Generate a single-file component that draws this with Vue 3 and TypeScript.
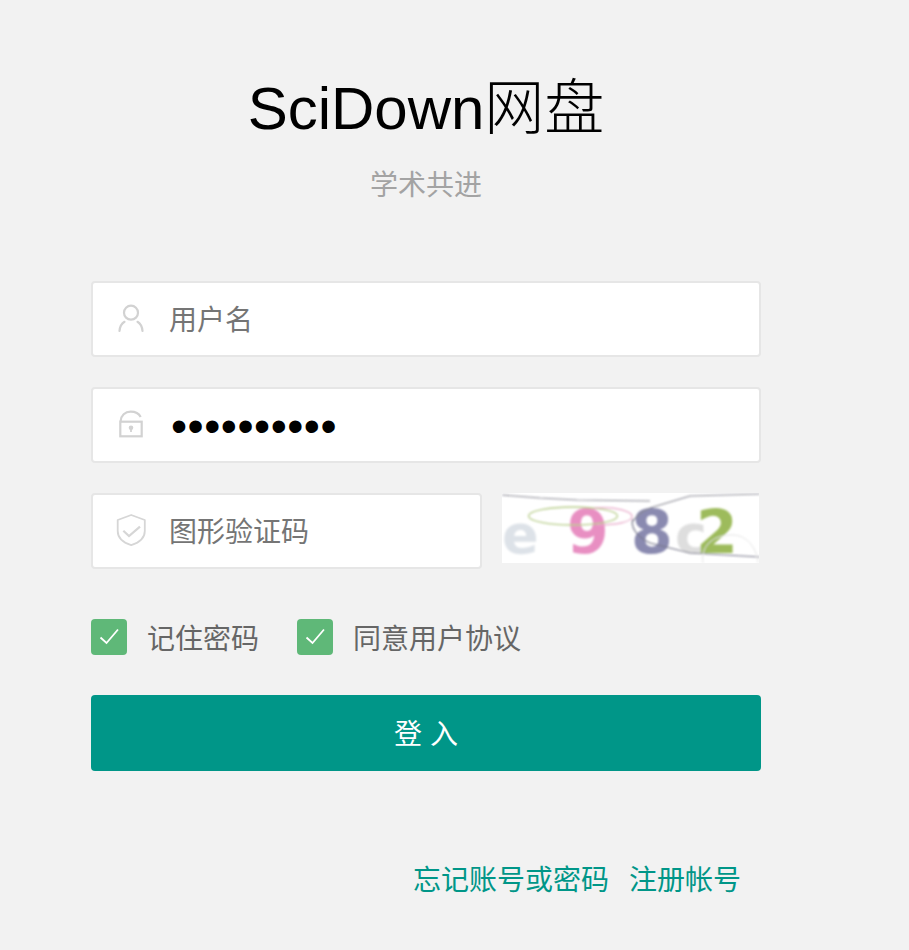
<script setup lang="ts">
const remember = [
  { label: '记住密码' },
  { label: '同意用户协议' },
]
</script>

<template>
  <main class="page">
    <header class="head">
      <h1 class="title">SciDown网盘</h1>
      <p class="sub">学术共进</p>
    </header>
    <form class="form" @submit.prevent>
      <label class="field">
        <svg class="ico" viewBox="0 0 32 32" width="32" height="32" fill="none" stroke="#d2d2d2" stroke-width="2.200">
          <circle cx="14" cy="9.700" r="7" />
          <path d="M2.500 28C2.800 24 4 21 7.500 18.800M25.500 28C25.200 24 24 21 20.500 18.800" stroke-linecap="round" />
        </svg>
        <input class="inp" type="text" placeholder="用户名" />
      </label>
      <label class="field">
        <svg class="ico" viewBox="0 0 32 32" width="32" height="32" fill="none" stroke="#d2d2d2" stroke-width="2.200">
          <rect x="3.300" y="12.700" width="21.400" height="14.600" />
          <path d="M3.700 12C4 6.500 8 2.700 13.700 2.700c4.500 0 8.300 2 10 5.300" />
          <circle cx="14" cy="18.700" r="2.300" fill="#d2d2d2" stroke="none" />
          <path d="M14 19v4" stroke-width="1.800" />
        </svg>
        <input class="inp pw" type="password" value="1234567890" />
      </label>
      <div class="row">
        <label class="field code">
          <svg class="ico" viewBox="0 0 32 32" width="32" height="32" fill="none" stroke="#d6d6d6" stroke-width="1.800">
            <path d="M14.200 0 L27.800 5 V16c0 7-6.200 11.800-13.600 14.200C6.800 27.800 0.700 23 0.700 16V5Z" stroke-linejoin="round" />
            <path d="M6.300 15.700l5.700 5.300 11-9.300" stroke-width="2.200" />
          </svg>
          <input class="inp" type="text" placeholder="图形验证码" />
        </label>
        <svg class="captcha" viewBox="0 0 257 70" width="257" height="70">
          <defs>
            <filter id="soft" x="-5%" y="-5%" width="110%" height="110%"><feGaussianBlur stdDeviation="1" /></filter>
            <clipPath id="frame"><rect width="257" height="70" /></clipPath>
          </defs>
          <rect width="257" height="70" fill="#fff" />
          <g clip-path="url(#frame)">
            <g filter="url(#soft)">
              <text x="0" y="60" class="cap" fill="#dde2e8" font-size="54">e</text>
              <text x="65" y="60" class="cap" fill="#e88fc2" font-size="60">9</text>
              <text x="129" y="60" class="cap" fill="#8a8ab0" font-size="60">8</text>
              <text x="173" y="60" class="cap" fill="#dedede" font-size="54">c</text>
              <text x="194" y="60" class="cap" fill="#9dbb5c" font-size="60">2</text>
              <path d="M0 2 L38 5 L75 7 L148 8" fill="none" stroke="#8a8a94" stroke-width="1.200" />
              <path d="M131 28C135 22 141 18 148 15L188 3L258 1" fill="none" stroke="#8a8a94" stroke-width="1.200" />
              <ellipse cx="71" cy="23" rx="44.500" ry="9" fill="none" stroke="#b9cf8d" stroke-width="1.300" />
              <path d="M92 15C115 13 131 19 130 24C129 29 115 32 95 32" fill="none" stroke="#e8a8c8" stroke-width="1.100" />
              <path d="M131 26C128 34 135 44 148 50L188 60L258 64" fill="none" stroke="#77778a" stroke-width="1.200" />
              <path d="M201 70C198 50 215 41 232 42C246 43 255 56 256 70" fill="none" stroke="#e4e4e4" stroke-width="1" />
            </g>
          </g>
        </svg>
      </div>
      <div class="checks">
        <label v-for="item in remember" :key="item.label" class="check">
          <span class="box">
            <svg viewBox="0 0 36 36" width="36" height="36" fill="none" stroke="#fff" stroke-width="1.800">
              <path d="M9.500 18.500L15.500 24L27 10.500" />
            </svg>
          </span>
          <span class="lab">{{ item.label }}</span>
        </label>
      </div>
      <button class="btn" type="submit"><span class="btn-text">登 入</span></button>
      <nav class="links">
        <a href="#">忘记账号或密码</a>
        <a href="#">注册帐号</a>
      </nav>
    </form>
  </main>
</template>

<style>
html, body { margin: 0; background: #f2f2f2; }
</style>

<style scoped>
.page {
  height: 950px;
  box-sizing: border-box;
  padding: 71px 148px 0 91px;
  font-family: "Liberation Sans", "Noto Sans CJK SC", sans-serif;
  overflow: hidden;
}
.head { text-align: center; }
.title {
  margin: 0;
  font-size: 60px;
  font-weight: 300;
  line-height: 76px;
  color: #000;
}
.sub {
  margin: 0;
  padding-top: 19px;
  font-size: 28px;
  line-height: 40px;
  color: #a3a3a3;
}
.form { padding-top: 75px; }
.field {
  display: flex;
  align-items: center;
  height: 76px;
  box-sizing: border-box;
  margin-bottom: 30px;
  padding-left: 24px;
  background: #fff;
  border: 2px solid #e6e6e6;
  border-radius: 4px;
}
.ico { flex: none; overflow: visible; }
.inp {
  flex: 1;
  min-width: 0;
  margin-left: 20px;
  padding: 4px 0 0;
  border: 0;
  outline: 0;
  background: transparent;
  font: 28px "Liberation Sans", "Noto Sans CJK SC", sans-serif;
  color: #000;
}
.inp.pw { font-size: 46px; letter-spacing: 0.5px; padding: 2px 0 0 2px; }
.inp::placeholder { color: #757575; opacity: 1; }
.row { display: flex; align-items: flex-start; gap: 20px; }
.code { width: 391px; flex: none; }
.captcha { flex: none; overflow: visible; }
.cap { font-family: "DejaVu Sans", sans-serif; font-weight: 700; }
.checks { display: flex; gap: 38px; padding-top: 18px; }
.check { display: flex; align-items: center; gap: 20px; height: 40px; }
.box {
  display: block;
  width: 36px;
  height: 36px;
  border-radius: 4px;
  background: #5fb878;
}
.box svg { display: block; }
.lab { font-size: 28px; color: #666; }
.btn {
  display: block;
  width: 100%;
  height: 76px;
  margin-top: 38px;
  padding: 0 0 2px;
  border: 0;
  border-radius: 4px;
  background: #009688;
  color: #fff;
  font: 28px "Liberation Sans", "Noto Sans CJK SC", sans-serif;
}
.links {
  display: flex;
  justify-content: flex-end;
  gap: 20px;
  padding: 90px 20px 0 0;
  font-size: 28px;
  line-height: 40px;
}
.links a { color: #009688; text-decoration: none; }
</style>
